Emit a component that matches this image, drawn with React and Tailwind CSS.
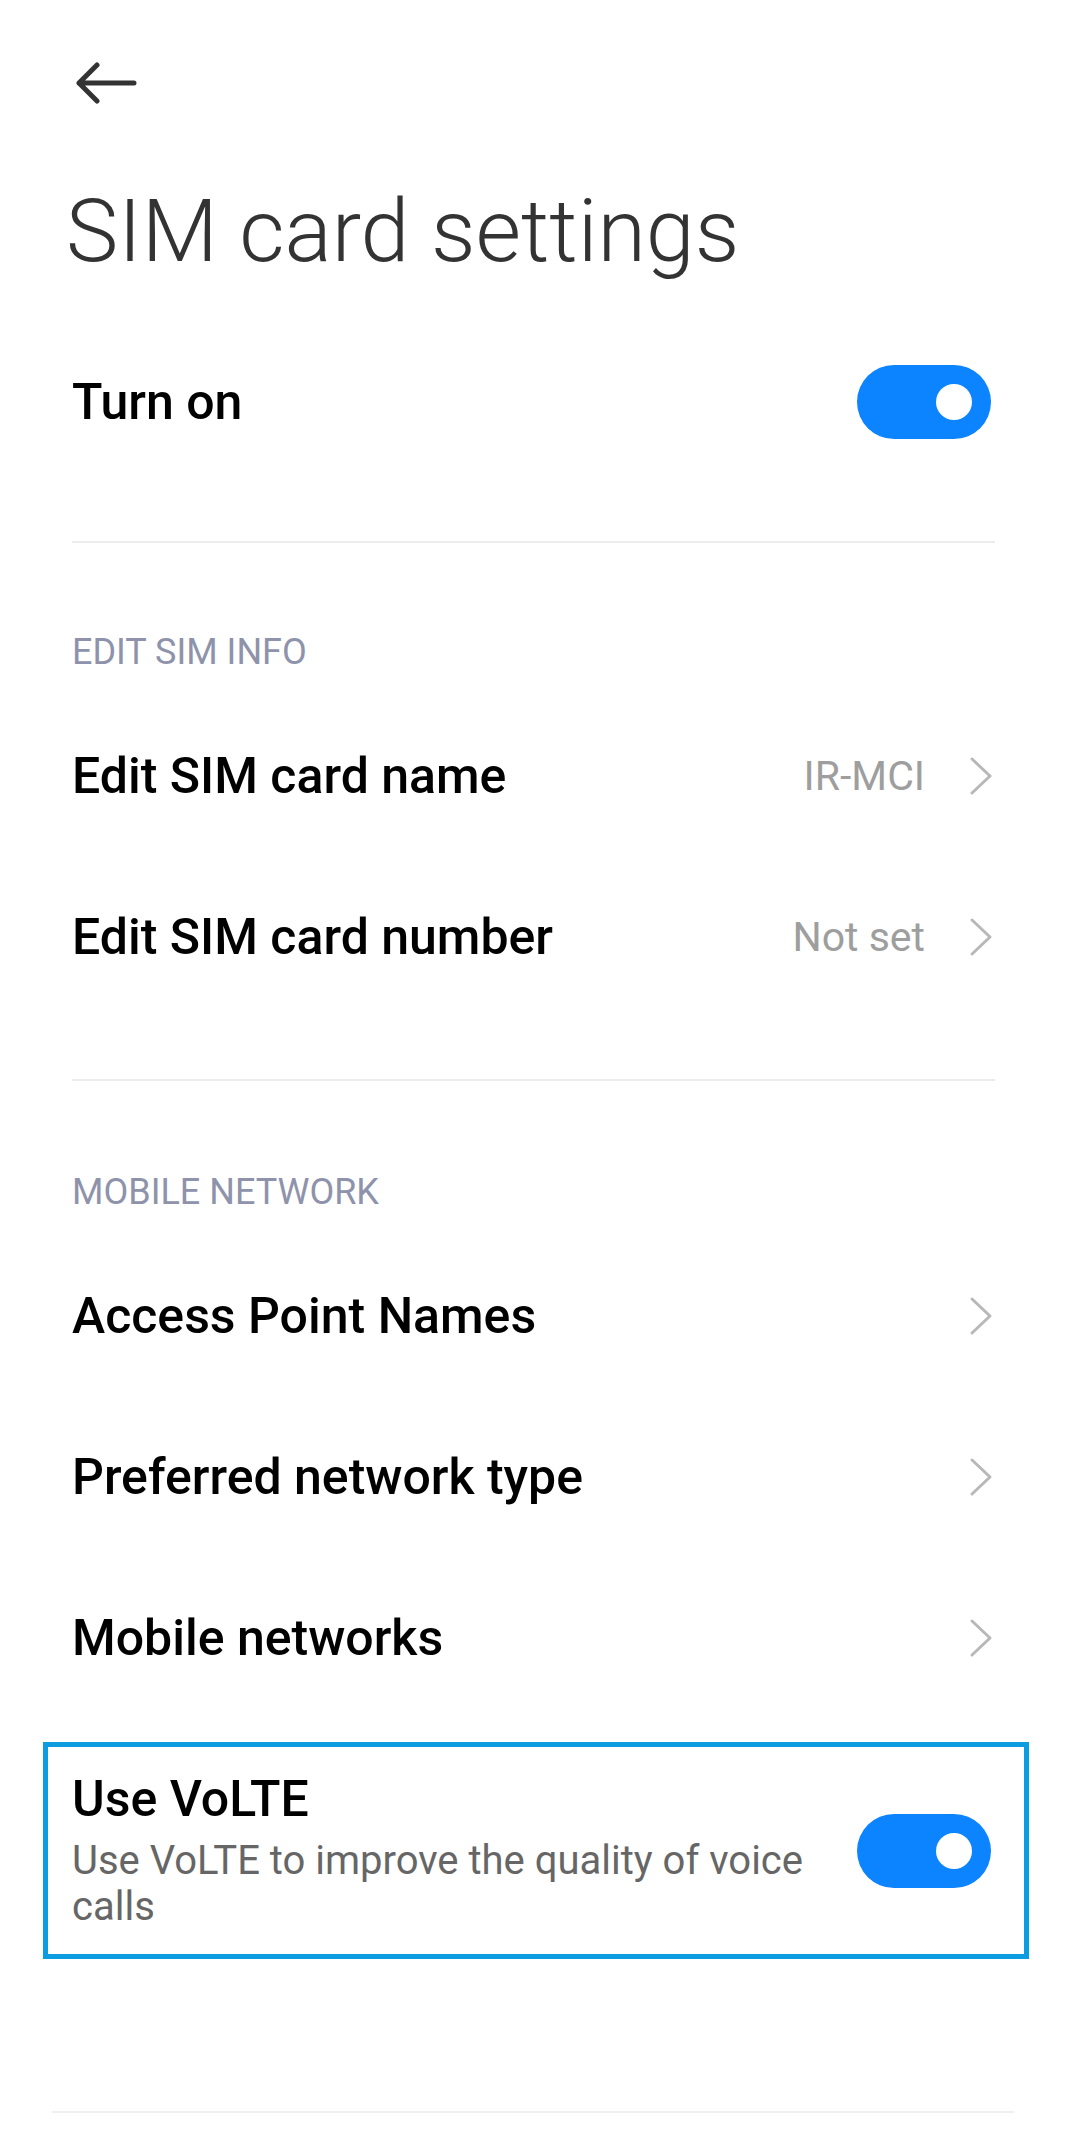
import React, { useState } from 'react';

const font = { fontFamily: 'Roboto, "Noto Sans", sans-serif' };

const Toggle = ({ on, onChange }) => (
    <button
        onClick={onChange}
        className={`flex items-center shrink-0 w-[134px] h-[74px] rounded-full pr-[19px] pl-[19px] ${on ? 'bg-[#0d84ff] justify-end' : 'bg-[#e5e5e5] justify-start'}`}
    >
        <span className="block w-[36px] h-[36px] rounded-full bg-white" />
    </button>
);

const Chevron = () => (
    <svg width="24" height="40" viewBox="0 0 24 40" className="shrink-0 -mr-[2px]">
        <polyline points="3,3 21,20 3,37" fill="none" stroke="#b8b8b8" strokeWidth="3" strokeLinecap="round" strokeLinejoin="round" />
    </svg>
);

const SectionHeader = ({ children }) => (
    <div className="h-[40px] leading-[40px] text-[36px] text-[#8e93ab] uppercase">{children}</div>
);

const NavRow = ({ title, value, first }) => (
    <div className={`flex items-center h-[161px] ${first ? 'mt-[23px]' : ''}`}>
        <span className="flex-1 text-[50px] font-medium text-black leading-[58px]">{title}</span>
        {value && <span className="text-[41px] text-[#9e9e9e] leading-[48px] mr-[44px]">{value}</span>}
        {!value && <span className="mr-[44px]" />}
        <Chevron />
    </div>
);

const App = () => {
    const [simOn, setSimOn] = useState(true);
    const [volte, setVolte] = useState(true);

    return (
        <div className="min-h-[2153px] w-full bg-white pl-[72px] pr-[80px]" style={font}>
            {/* back arrow */}
            <div className="pt-[61px]">
                <svg width="62" height="44" viewBox="0 0 62 44" className="ml-[4px] block">
                    <path d="M3 22 H58 M21 4 L3 22 L21 40" fill="none" stroke="#333333" strokeWidth="5" strokeLinecap="round" strokeLinejoin="round" />
                </svg>
            </div>

            <h1 className="mt-[76px] -ml-[6px] h-[100px] leading-[100px] text-[88px] font-light text-[#333333]">SIM card settings</h1>

            <div className="flex items-center justify-between h-[140px] mt-[51px]">
                <span className="text-[50px] font-medium text-black leading-[58px]">Turn on</span>
                <Toggle on={simOn} onChange={() => setSimOn(!simOn)} />
            </div>

            <div className="h-[2px] bg-[#ececec] mt-[69px] -mr-[4px]" />

            <div className="mt-[89px]">
                <SectionHeader>Edit SIM info</SectionHeader>
                <NavRow first title="Edit SIM card name" value="IR-MCI" />
                <NavRow title="Edit SIM card number" value="Not set" />
            </div>

            <div className="h-[2px] bg-[#ececec] mt-[62px] -mr-[4px]" />

            <div className="mt-[91px]">
                <SectionHeader>Mobile network</SectionHeader>
                <NavRow first title="Access Point Names" />
                <NavRow title="Preferred network type" />
                <NavRow title="Mobile networks" />
            </div>

            <div className="mt-[24px] -ml-[29px] -mr-[38px] border-[5px] border-[#0b9de0] flex items-center pl-[24px] pr-[33px] pt-[24px] pb-[24px]">
                <div className="flex-1 pr-[8px]">
                    <div className="text-[50px] font-medium text-black leading-[56px]">Use VoLTE</div>
                    <div className="mt-[11px] text-[40px] text-[#666666] leading-[46px]">
                        Use VoLTE to improve the quality of voice calls
                    </div>
                </div>
                <Toggle on={volte} onChange={() => setVolte(!volte)} />
            </div>

            <div className="h-[2px] bg-[#f0f0f0] mt-[152px] -ml-[20px] -mr-[23px]" />
        </div>
    );
};

export default App;
